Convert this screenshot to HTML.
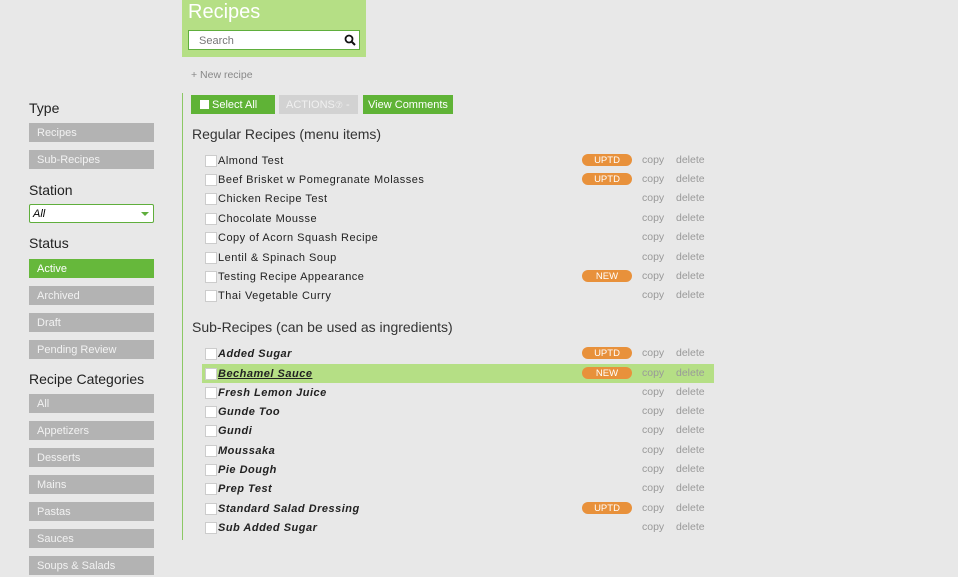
<!DOCTYPE html><html><head><style>
body{margin:0;width:958px;height:569px;background:#e8e8e8;font-family:"Liberation Sans",sans-serif;position:relative;overflow:hidden}
.a{position:absolute}
.h{position:absolute;left:29px;font-size:14px;color:#222}
.b{position:absolute;left:29px;width:125px;height:19px;background:#b3b3b3;color:#f2f2f2;font-size:11px;line-height:21px;text-indent:8px}
.r{position:absolute;left:202px;width:512px;height:19px;font-size:11px;color:#222;letter-spacing:.5px}
.r .cb{position:absolute;left:3px;top:4px;width:10px;height:10px;background:#fff;border:1px solid #ccc}
.r .t{position:absolute;left:16px;top:4px}
.r .bd{position:absolute;left:380px;top:3px;width:50px;height:12px;border-radius:6px;background:#e8913b;color:#fff;font-size:9.5px;text-align:center;line-height:13px;letter-spacing:0}
.r .c{position:absolute;left:440px;top:3px;color:#999;font-size:10.5px;letter-spacing:0}
.r .d{position:absolute;left:474px;top:3px;color:#999;font-size:10.5px;letter-spacing:0}
.s .t{font-style:italic;font-weight:bold}
.sec{position:absolute;left:192px;font-size:14px;color:#333}
</style></head><body>
<div class="h" style="top:100px">Type</div>
<div class="b" style="top:123px">Recipes</div>
<div class="b" style="top:150px">Sub-Recipes</div>
<div class="h" style="top:182px">Station</div>
<div class="a" style="left:29px;top:204px;width:123px;height:17px;background:#fff;border:1px solid #5fae3c;border-radius:2px;font-size:11px;font-style:italic;line-height:19px;text-indent:3px">All<span class="a" style="right:4px;top:7px;border:4px solid transparent;border-top:4px solid #5fae3c;border-bottom:0"></span></div>
<div class="h" style="top:235px">Status</div>
<div class="b" style="top:259px;background:#66b83b;color:#fff">Active</div>
<div class="b" style="top:286px">Archived</div>
<div class="b" style="top:313px">Draft</div>
<div class="b" style="top:340px">Pending Review</div>
<div class="h" style="top:371px">Recipe Categories</div>
<div class="b" style="top:394px">All</div>
<div class="b" style="top:421px">Appetizers</div>
<div class="b" style="top:448px">Desserts</div>
<div class="b" style="top:475px">Mains</div>
<div class="b" style="top:502px">Pastas</div>
<div class="b" style="top:529px">Sauces</div>
<div class="b" style="top:556px">Soups &amp; Salads</div>

<div class="a" style="left:182px;top:0;width:184px;height:57px;background:#b5df85"></div>
<div class="a" style="left:188px;top:1px;font-size:20px;color:#fff">Recipes</div>
<div class="a" style="left:188px;top:30px;width:170px;height:18px;background:#fff;border:1px solid #5fae3c;font-size:11px;color:#777;line-height:20px;text-indent:10px">Search
<svg class="a" style="right:3px;top:3px" width="12" height="12" viewBox="0 0 12 12"><circle cx="5" cy="5" r="3.5" fill="none" stroke="#111" stroke-width="1.8"/><path d="M7.5 7.5L11 11" stroke="#111" stroke-width="2"/></svg></div>
<div class="a" style="left:191px;top:69px;font-size:10.5px;color:#888">+ New recipe</div>
<div class="a" style="left:182px;top:93px;width:1px;height:447px;background:#8cc865"></div>
<div class="a" style="left:191px;top:95px;width:84px;height:19px;background:#5fb336;color:#fff;font-size:11px;line-height:20px"><span class="a" style="left:9px;top:5px;width:9px;height:9px;background:#fff"></span><span style="margin-left:21px">Select All</span></div>
<div class="a" style="left:279px;top:95px;width:79px;height:19px;background:#d2d2d2;color:#f0f0f0;font-size:11px;line-height:20px;text-indent:7px">ACTIONS<span style="font-size:9px">⑦</span> -</div>
<div class="a" style="left:363px;top:95px;width:90px;height:19px;background:#5fb336;color:#fff;font-size:11px;line-height:20px;text-align:center">View Comments</div>

<div class="sec" style="top:126px">Regular Recipes (menu items)</div>
<div class="r" style="top:151px"><i class="cb"></i><span class="t">Almond Test</span><span class="bd">UPTD</span><span class="c">copy</span><span class="d">delete</span></div>
<div class="r" style="top:170px"><i class="cb"></i><span class="t">Beef Brisket w Pomegranate Molasses</span><span class="bd">UPTD</span><span class="c">copy</span><span class="d">delete</span></div>
<div class="r" style="top:189px"><i class="cb"></i><span class="t">Chicken Recipe Test</span><span class="c">copy</span><span class="d">delete</span></div>
<div class="r" style="top:209px"><i class="cb"></i><span class="t">Chocolate Mousse</span><span class="c">copy</span><span class="d">delete</span></div>
<div class="r" style="top:228px"><i class="cb"></i><span class="t">Copy of Acorn Squash Recipe</span><span class="c">copy</span><span class="d">delete</span></div>
<div class="r" style="top:248px"><i class="cb"></i><span class="t">Lentil &amp; Spinach Soup</span><span class="c">copy</span><span class="d">delete</span></div>
<div class="r" style="top:267px"><i class="cb"></i><span class="t">Testing Recipe Appearance</span><span class="bd">NEW</span><span class="c">copy</span><span class="d">delete</span></div>
<div class="r" style="top:286px"><i class="cb"></i><span class="t">Thai Vegetable Curry</span><span class="c">copy</span><span class="d">delete</span></div>

<div class="sec" style="top:319px">Sub-Recipes (can be used as ingredients)</div>
<div class="r s" style="top:344px"><i class="cb"></i><span class="t">Added Sugar</span><span class="bd">UPTD</span><span class="c">copy</span><span class="d">delete</span></div>
<div class="r s" style="top:364px;background:#b5df85"><i class="cb"></i><span class="t" style="text-decoration:underline">Bechamel Sauce</span><span class="bd">NEW</span><span class="c">copy</span><span class="d">delete</span></div>
<div class="r s" style="top:383px"><i class="cb"></i><span class="t">Fresh Lemon Juice</span><span class="c">copy</span><span class="d">delete</span></div>
<div class="r s" style="top:402px"><i class="cb"></i><span class="t">Gunde Too</span><span class="c">copy</span><span class="d">delete</span></div>
<div class="r s" style="top:421px"><i class="cb"></i><span class="t">Gundi</span><span class="c">copy</span><span class="d">delete</span></div>
<div class="r s" style="top:441px"><i class="cb"></i><span class="t">Moussaka</span><span class="c">copy</span><span class="d">delete</span></div>
<div class="r s" style="top:460px"><i class="cb"></i><span class="t">Pie Dough</span><span class="c">copy</span><span class="d">delete</span></div>
<div class="r s" style="top:479px"><i class="cb"></i><span class="t">Prep Test</span><span class="c">copy</span><span class="d">delete</span></div>
<div class="r s" style="top:499px"><i class="cb"></i><span class="t">Standard Salad Dressing</span><span class="bd">UPTD</span><span class="c">copy</span><span class="d">delete</span></div>
<div class="r s" style="top:518px"><i class="cb"></i><span class="t">Sub Added Sugar</span><span class="c">copy</span><span class="d">delete</span></div>
</body></html>
